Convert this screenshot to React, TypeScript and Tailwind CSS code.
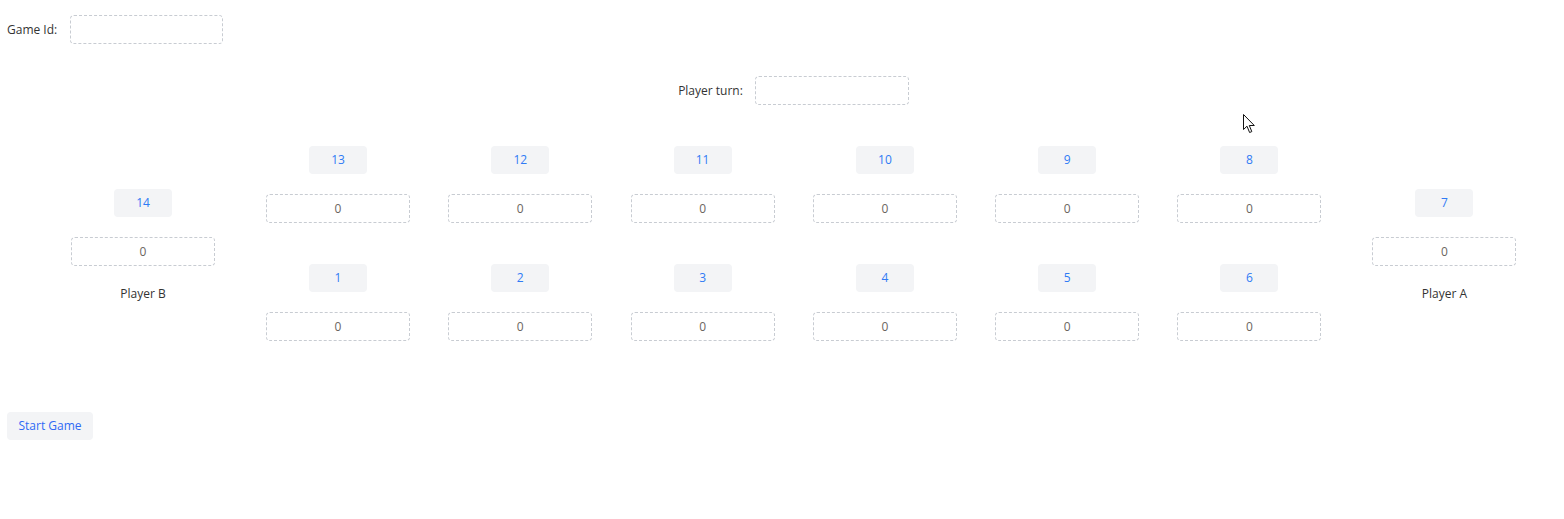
import React from 'react';

const topPits = [13, 12, 11, 10, 9, 8];
const bottomPits = [1, 2, 3, 4, 5, 6];

function PitLabel({ n }: { n: number }) {
  return (
    <div className="w-[58px] h-[28px] rounded bg-[#f3f4f6] text-[#2f7bf5] flex items-center justify-center text-[12px]">
      {n}
    </div>
  );
}

function PitInput({ value }: { value: number }) {
  return (
    <div className="w-[144px] h-[29px] rounded-sm border border-dashed border-[#c8ccd2] flex items-center justify-center text-[12px] text-[#6b6560]">
      {value}
    </div>
  );
}

function Pit({ n }: { n: number }) {
  return (
    <div className="flex flex-col items-center gap-[20px]">
      <PitLabel n={n} />
      <PitInput value={0} />
    </div>
  );
}

function Store({ n, player }: { n: number; player: string }) {
  return (
    <div className="flex flex-col items-center mt-[4px]">
      <PitLabel n={n} />
      <div className="mt-[20px]">
        <PitInput value={0} />
      </div>
      <div className="mt-[20px] text-[12px] text-[#333] leading-[16px]">{player}</div>
    </div>
  );
}

export default function App() {
  return (
    <div className="relative w-[1564px] h-[519px] bg-white text-[#333] font-['Open_Sans',sans-serif] text-[12px]">
      {/* Game id */}
      <div className="flex items-center pt-[15px] pl-[7px] gap-[13px]">
        <span>Game Id:</span>
        <div className="w-[153px] h-[29px] rounded border border-dashed border-[#c8ccd2]" />
      </div>

      {/* Player turn */}
      <div className="flex items-center justify-center pl-[23px] mt-[32px] gap-[12px]">
        <span>Player turn:</span>
        <div className="w-[154px] h-[29px] rounded border border-dashed border-[#c8ccd2]" />
      </div>

      {/* Board */}
      <div className="flex items-center mt-[41px] pl-[71px]">
        <Store n={14} player="Player B" />
        <div className="flex flex-col gap-[41px] ml-[51px]">
          <div className="flex gap-[38.3px]">
            {topPits.map((n) => (
              <Pit key={n} n={n} />
            ))}
          </div>
          <div className="flex gap-[38.3px]">
            {bottomPits.map((n) => (
              <Pit key={n} n={n} />
            ))}
          </div>
        </div>
        <div className="ml-[51px]">
          <Store n={7} player="Player A" />
        </div>
      </div>

      {/* Start */}
      <div className="pl-[7px] mt-[71px]">
        <button className="h-[28px] w-[86px] rounded bg-[#f3f4f6] text-[#2f6af5] text-[12px]">
          Start Game
        </button>
      </div>

      {/* mouse pointer */}
      <svg className="absolute left-[1243px] top-[114px]" width="13" height="20" viewBox="0 0 13 20">
        <path d="M0.5 0.5 L0.5 15.5 L4 12.2 L6.6 18.5 L8.8 17.6 L6.3 11.5 L11.3 11.5 Z" fill="white" stroke="#111" strokeWidth="1" strokeLinejoin="round" />
      </svg>
    </div>
  );
}
